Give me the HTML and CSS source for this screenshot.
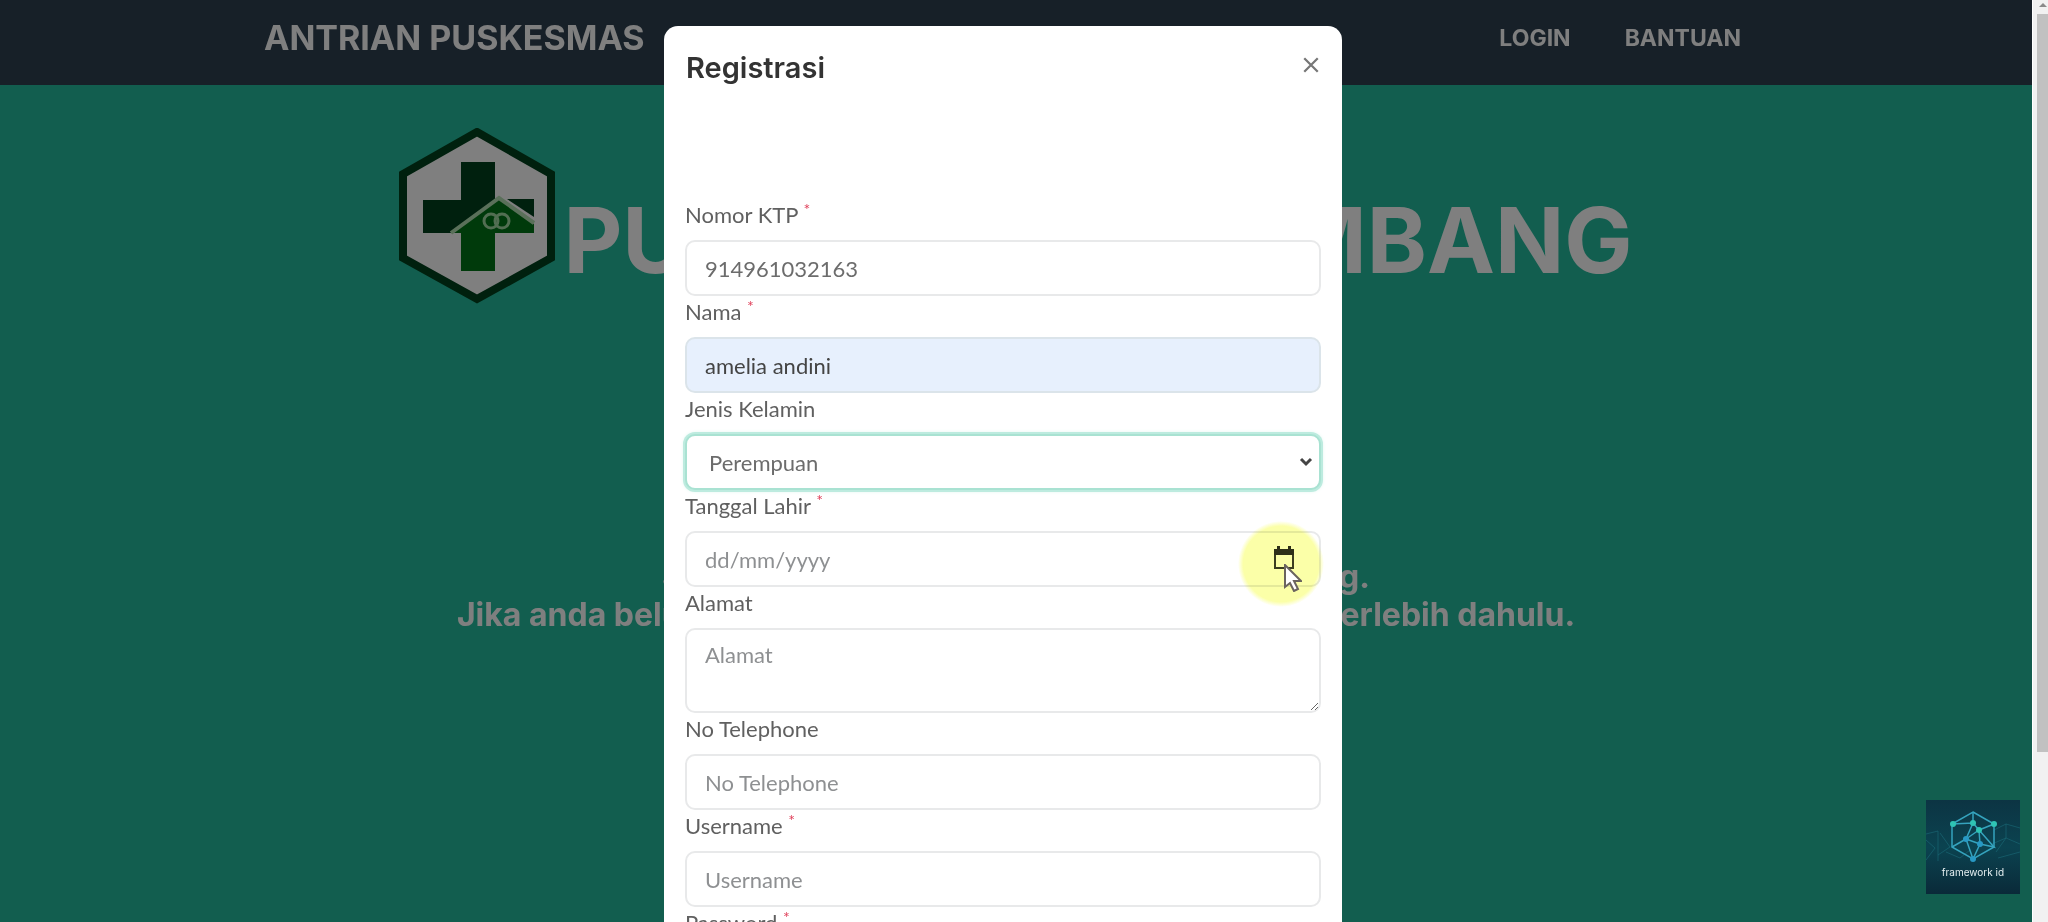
FILE: index.html
```html
<!DOCTYPE html>
<html lang="id">

<head>
  <meta charset="UTF-8">
  <meta name="viewport" content="width=device-width, initial-scale=1.0">
  <link rel="stylesheet" href="styles.css">
  <title>Antrian Puskesmas</title>
</head>

<body>

  <div class="window">
    <div class="page">

      <nav class="navbar">
        <div class="container">
          <a class="brand" href="#">ANTRIAN PUSKESMAS</a>
          <div class="nav-links">
            <a href="#login">LOGIN</a>
            <a href="#bantuan">BANTUAN</a>
          </div>
        </div>
      </nav>

      <header class="masthead">
        <div class="masthead-title">
          <svg class="logo" viewBox="0 0 156 176" aria-hidden="true">
            <polygon points="78,4 152,46 152,130 78,171 4,130 4,46" fill="#fff" stroke="#00401c" stroke-width="8"/>
            <path d="M62 34h34v38L54 105H24V72h38z" fill="#00401c"/>
            <path d="M108 71h27v18z" fill="#00401c"/>
            <path d="M100 70l35 26v9H96v38H62v-38H54z" fill="#007416"/>
            <path d="M52 105L100 70l35 25" fill="none" stroke="#b4e0b4" stroke-width="4"/>
            <g fill="none" stroke="#a4dca4" stroke-width="3">
              <circle cx="92" cy="93" r="7"/>
              <circle cx="103" cy="93" r="7"/>
            </g>
          </svg>
          <h1>PUSKESMAS KEMBANG</h1>
        </div>
        <p>Selamat datang di web Puskesmas Kembang.<br>
          Jika anda belum memiliki akun, silahkan registrasi akun terlebih dahulu.</p>
      </header>

      <div class="backdrop">
        <div class="modal" role="dialog" aria-labelledby="modalTitle">
          <div class="modal-header">
            <h2 id="modalTitle">Registrasi</h2>
            <button type="button" class="close" aria-label="Close">
              <svg viewBox="0 0 16 16"><path d="M2 2l12 12M14 2L2 14"/></svg>
            </button>
          </div>
          <form class="modal-body">
            <label for="ktp">Nomor KTP <sup>*</sup></label>
            <input class="control" type="text" id="ktp" value="914961032163">

            <label for="nama">Nama <sup>*</sup></label>
            <input class="control autofill" type="text" id="nama" value="amelia andini">

            <label for="kelamin">Jenis Kelamin</label>
            <div class="field">
              <select class="control focused" id="kelamin">
                <option>Laki-laki</option>
                <option selected>Perempuan</option>
              </select>
              <svg class="chevron" viewBox="0 0 14 10"><path d="M2 2l5 5 5-5"/></svg>
            </div>

            <label for="lahir">Tanggal Lahir <sup>*</sup></label>
            <div class="field">
              <input class="control" type="text" id="lahir" placeholder="dd/mm/yyyy">
              <span class="highlight"></span>
              <button type="button" class="calendar" aria-label="Pilih tanggal">
                <svg viewBox="0 0 22 24"><path d="M2 4h18v18H2z" fill="none" stroke="#3c3e20" stroke-width="2"/><path d="M1 3h20v6H1zM4 0h3v4H4zM15 0h3v4h-3z" fill="#2e3018"/></svg>
              </button>
              <svg class="cursor" viewBox="0 0 18 28"><path d="M1 1v22l5-4 4 8 4-2-4-8h7z" fill="#fff" stroke="#6a645e" stroke-width="2"/></svg>
            </div>

            <label for="alamat">Alamat</label>
            <textarea class="control" id="alamat" placeholder="Alamat"></textarea>

            <label for="telp">No Telephone</label>
            <input class="control" type="text" id="telp" placeholder="No Telephone">

            <label for="username">Username <sup>*</sup></label>
            <input class="control" type="text" id="username" placeholder="Username">

            <label for="password">Password <sup>*</sup></label>
            <input class="control" type="password" id="password" placeholder="Password">
          </form>
        </div>
      </div>

      <div class="watermark">
        <svg viewBox="0 0 94 66" aria-hidden="true">
          <g fill="none" stroke="#1b6a78" stroke-width="1" opacity=".6">
            <path d="M0 34l12-3v30M0 40l9 8-9 12M14 33l10 14-12 8M20 52l14 6 10-8M68 30l12-6 14 4M70 52l10-14 14 6M66 44l14-6 0-14M72 58l22-6"/>
          </g>
          <g fill="none" stroke="#35a3bd" stroke-width="1.5">
            <path d="M47 12l21 12v23L47 59 26 47V24z"/>
            <path d="M47 12v11M26 24l21-1 6 7 15-6M47 23l-7 16 13-9M40 39L26 47M40 39l7 20 7-15-14-5M53 30l1 14M53 30l15 17-14-3"/>
          </g>
          <g fill="#2fc4b4">
            <circle cx="27" cy="24" r="3"/>
            <circle cx="47" cy="23" r="3"/>
            <circle cx="68" cy="24" r="3"/>
            <circle cx="53" cy="30" r="3"/>
          </g>
          <g fill="#2899c4">
            <circle cx="40" cy="39" r="3"/>
            <circle cx="54" cy="44" r="3"/>
            <circle cx="47" cy="59" r="3"/>
          </g>
        </svg>
        <span>framework id</span>
      </div>

    </div>

    <div class="scrollbar">
      <svg viewBox="0 0 12 14" aria-hidden="true"><path d="M2 7l4-4 4 4z" fill="#8a8a8a"/></svg>
      <div class="thumb"></div>
    </div>
  </div>

</body>

</html>
```

FILE: styles.css
```css
* {
  box-sizing: border-box;
}

body {
  margin: 0;
  font-family: Lato, "Liberation Sans", sans-serif;
  font-size: 22px;
  color: #606060;
}

.window {
  display: flex;
  height: 100vh;
  overflow: hidden;
}

.page {
  position: relative;
  flex: 1;
  overflow: hidden;
  background-color: #24bc9e;
}

/* Navbar */
.navbar {
  background-color: #2e4050;
  padding: 0 32px;
}

.container {
  display: flex;
  justify-content: space-between;
  max-width: 1504px;
  height: 85px;
  padding-bottom: 10px;
  margin: 0 auto;
  align-items: center;
}

.navbar a {
  color: #fff;
  font-family: Inter, sans-serif;
  font-weight: 700;
  text-decoration: none;
}

.brand {
  font-size: 34px;
}

.nav-links {
  display: flex;
}

.navbar .nav-links a {
  font-size: 23px;
  padding: 0 27px;
}

/* Masthead */
.masthead {
  padding-top: 43px;
  color: #fff;
  font-family: Inter, sans-serif;
  text-align: center;
}

.masthead-title {
  display: flex;
  justify-content: center;
  align-items: center;
  gap: 8px;
}

.logo {
  width: 156px;
  height: 176px;
  flex: none;
}

.masthead h1 {
  margin: 48px 0 0;
  font-size: 91px;
  line-height: 100px;
  font-weight: 700;
  white-space: nowrap;
}

.masthead p {
  margin: 254px 0 0;
  font-size: 32px;
  line-height: 38px;
  font-weight: 700;
}

/* Modal */
.backdrop {
  position: absolute;
  inset: 0;
  padding: 26px 26px 0 0;
  background-color: rgba(0, 0, 0, 0.5);
}

.modal {
  max-width: 678px;
  margin: 0 auto;
  background-color: #fff;
  border-radius: 14px;
}

.modal-header {
  display: flex;
  justify-content: space-between;
  align-items: flex-start;
  padding: 22px;
}

.modal-header h2 {
  margin: 0;
  color: #333;
  font-family: Inter, sans-serif;
  font-size: 29px;
  line-height: 40px;
  font-weight: 600;
}

.close {
  padding: 8px 0;
  border: 0;
  background: none;
  cursor: pointer;
}

.close svg {
  display: block;
  width: 18px;
  height: 18px;
  fill: none;
  stroke: #777;
  stroke-width: 2;
}

.modal-body {
  padding: 89px 21px 22px;
}

label {
  display: block;
  margin-bottom: 10px;
  line-height: 31px;
}

sup {
  color: #e0405a;
  font-size: 16px;
  line-height: 0;
}

.control {
  display: block;
  width: 100%;
  height: 56px;
  padding: 8px 18px;
  border: 2px solid #e8e9ea;
  border-radius: 10px;
  background-color: #fff;
  color: #6c6c6c;
  font: inherit;
  outline: none;
}

.control::placeholder {
  color: #8e9092;
  opacity: 1;
}

.autofill {
  background-color: #e7f0fd;
  border-color: #dbe4ea;
  color: #444;
}

.field {
  position: relative;
}

.focused {
  appearance: none;
  padding-left: 22px;
  border-color: #a9e2d2;
  box-shadow: 0 0 0 2px #bdebdf, 0 0 5px #bdebdf;
}

textarea.control {
  height: 85px;
  padding-top: 11px;
}

.chevron {
  position: absolute;
  right: 8px;
  top: 23px;
  width: 14px;
  height: 10px;
  fill: none;
  stroke: #444;
  stroke-width: 3;
}

.highlight {
  position: absolute;
  right: -3px;
  top: -10px;
  width: 86px;
  height: 86px;
  border-radius: 50%;
  background: radial-gradient(closest-side, #fbffa8 88%, rgba(251, 255, 168, 0));
  mix-blend-mode: multiply;
}

.calendar {
  position: absolute;
  right: 26px;
  top: 15px;
  padding: 0;
  border: 0;
  background: none;
}

.calendar svg {
  display: block;
  width: 22px;
  height: 24px;
}

.cursor {
  position: absolute;
  right: 19px;
  top: 33px;
  width: 18px;
  height: 28px;
}

/* Channel badge */
.watermark {
  position: absolute;
  right: 12px;
  bottom: 28px;
  width: 94px;
  height: 94px;
  background: linear-gradient(#0c3443, #0b4350 50%, #0a2a39);
  color: #e4eef0;
  font-family: Inter, sans-serif;
  font-size: 10px;
  line-height: 12px;
  text-align: center;
}

.watermark svg {
  display: block;
}

/* Scrollbar */
.scrollbar {
  width: 16px;
  padding-left: 4px;
  background-color: #f1f1f1;
  border-left: 1px solid #fff;
}

.scrollbar svg {
  display: block;
  height: 14px;
}

.thumb {
  height: 80vh;
  background-color: #c1c1c1;
}
```
